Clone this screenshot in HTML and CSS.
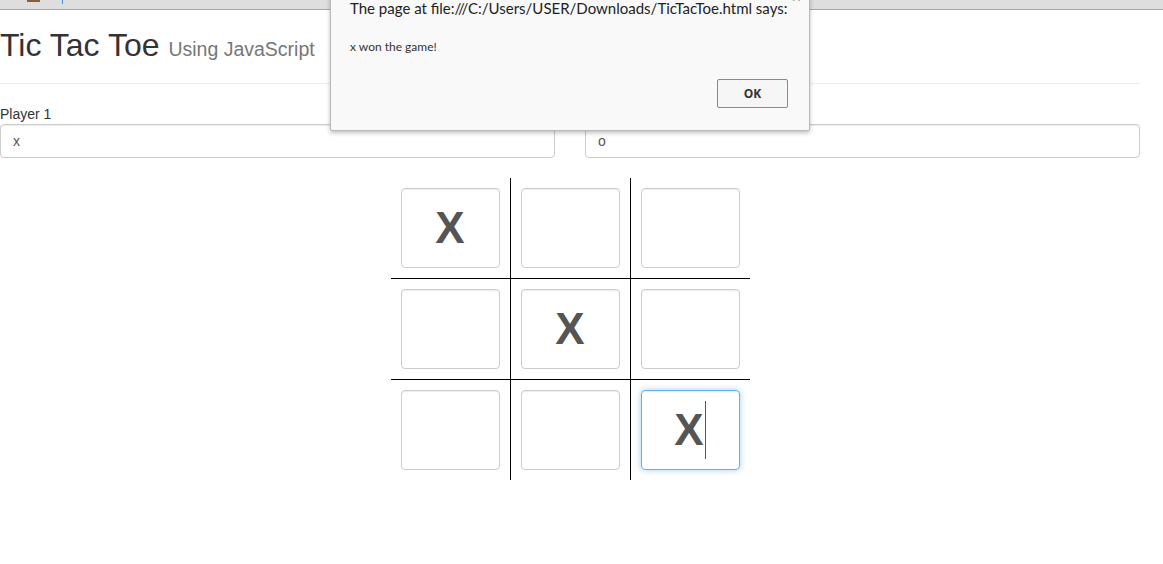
FILE: index.html
```html
<!DOCTYPE html>
<html lang="en">
<head>
<meta charset="utf-8">
<title>Tic Tac Toe</title>
<link rel="stylesheet" href="styles.css">
</head>
<body>
<div class="chrome-bar"><span class="bar-icon"></span><span class="bar-tick"></span></div>
<main class="page">
  <header class="page-header">
    <h1 class="title">Tic Tac Toe <small class="subtitle">Using JavaScript</small></h1>
  </header>
  <section class="players">
    <div class="field">
      <label class="field-label">Player 1</label>
      <div class="text-input">x</div>
    </div>
    <div class="field">
      <label class="field-label">Player 2</label>
      <div class="text-input">o</div>
    </div>
  </section>
  <table class="board">
    <tr>
      <td><div class="cell">X</div></td>
      <td><div class="cell"></div></td>
      <td><div class="cell"></div></td>
    </tr>
    <tr>
      <td><div class="cell"></div></td>
      <td><div class="cell">X</div></td>
      <td><div class="cell"></div></td>
    </tr>
    <tr>
      <td><div class="cell"></div></td>
      <td><div class="cell"></div></td>
      <td><div class="cell cell-focus">X<span class="caret"></span></div></td>
    </tr>
  </table>
</main>
<div class="alert">
  <span class="alert-close">×</span>
  <p class="alert-title">The page at file:///C:/Users/USER/Downloads/TicTacToe.html says:</p>
  <p class="alert-msg">x won the game!</p>
  <div class="alert-actions"><button class="alert-ok">OK</button></div>
</div>
</body>
</html>
```

FILE: styles.css
```css
html, body {
  margin: 0;
  padding: 0;
  background: #fff;
}
body {
  font-family: "Liberation Sans", Arial, Helvetica, sans-serif;
  font-size: 14px;
  color: #333;
  line-height: 1.42857;
}
.chrome-bar {
  height: 9px;
  background: #dedede;
  border-bottom: 1px solid #a8a8a8;
  display: flex;
  align-items: flex-start;
}
.bar-icon {
  width: 13px;
  height: 2px;
  margin-left: 27px;
  background: #8c5e33;
}
.bar-tick {
  width: 1px;
  height: 4px;
  margin-left: 22px;
  background: #4a90d9;
}
.page {
  width: 1140px;
}
.page-header {
  margin: 18px 0 20px;
  padding-bottom: 9px;
  border-bottom: 1px solid #eee;
}
.title {
  margin: 0 0 11px;
  font-size: 32px;
  font-weight: normal;
  line-height: 35px;
  color: #333;
}
.subtitle {
  font-size: 19.5px;
  line-height: 1;
  color: #777;
}
.players {
  display: grid;
  grid-template-columns: 1fr 1fr;
  column-gap: 30px;
}
.field-label {
  display: block;
  line-height: 20px;
}
.text-input {
  height: 34px;
  box-sizing: border-box;
  padding: 6px 12px;
  font-size: 14px;
  line-height: 20px;
  color: #555;
  border: 1px solid #ccc;
  border-radius: 4px;
  box-shadow: inset 0 1px 1px rgba(0,0,0,.075);
}
.board {
  margin: 20px auto 0;
  border-collapse: collapse;
}
.board td {
  padding: 10px;
}
.board td + td {
  border-left: 1px solid #000;
}
.board tr + tr td {
  border-top: 1px solid #000;
}
.cell {
  width: 99px;
  height: 80px;
  box-sizing: border-box;
  border: 1px solid #ccc;
  border-radius: 4px;
  box-shadow: inset 0 1px 1px rgba(0,0,0,.075);
  display: flex;
  align-items: center;
  justify-content: center;
  font-size: 44px;
  font-weight: bold;
  color: #555;
  line-height: 1;
}
.cell-focus {
  border-color: #66afe9;
  box-shadow: inset 0 1px 1px rgba(0,0,0,.075), 0 0 6px rgba(102,175,233,.6);
}
.caret {
  display: inline-block;
  width: 1px;
  height: 58px;
  background: #555;
  margin-left: 1px;
}
.alert {
  position: absolute;
  left: 330px;
  top: -12px;
  width: 480px;
  height: 143px;
  box-sizing: border-box;
  padding: 10px 19px 0;
  background: #f9f9f9;
  border: 1px solid #b9b9b9;
  border-radius: 2px;
  box-shadow: 0 2px 4px rgba(0,0,0,.25);
  font-family: Lato, "Open Sans", sans-serif;
  color: #333;
}
.alert-close {
  position: absolute;
  right: 8px;
  top: 0;
  font-size: 16px;
  line-height: 16px;
  color: #999;
}
.alert-title {
  margin: 0;
  font-size: 15px;
  line-height: 18px;
  color: #222;
}
.alert-msg {
  margin: 22px 0 0;
  font-size: 12px;
  line-height: 16px;
  color: #333;
}
.alert-actions {
  display: flex;
  justify-content: flex-end;
  margin-top: 24px;
  padding-right: 2px;
}
.alert-ok {
  width: 71px;
  height: 29px;
  background: #f6f6f6;
  border: 1px solid #4d90fe;
  border-radius: 2px;
  font-family: "Open Sans", Lato, sans-serif;
  font-weight: bold;
  font-size: 12px;
  color: #333;
  padding: 0;
}
```
